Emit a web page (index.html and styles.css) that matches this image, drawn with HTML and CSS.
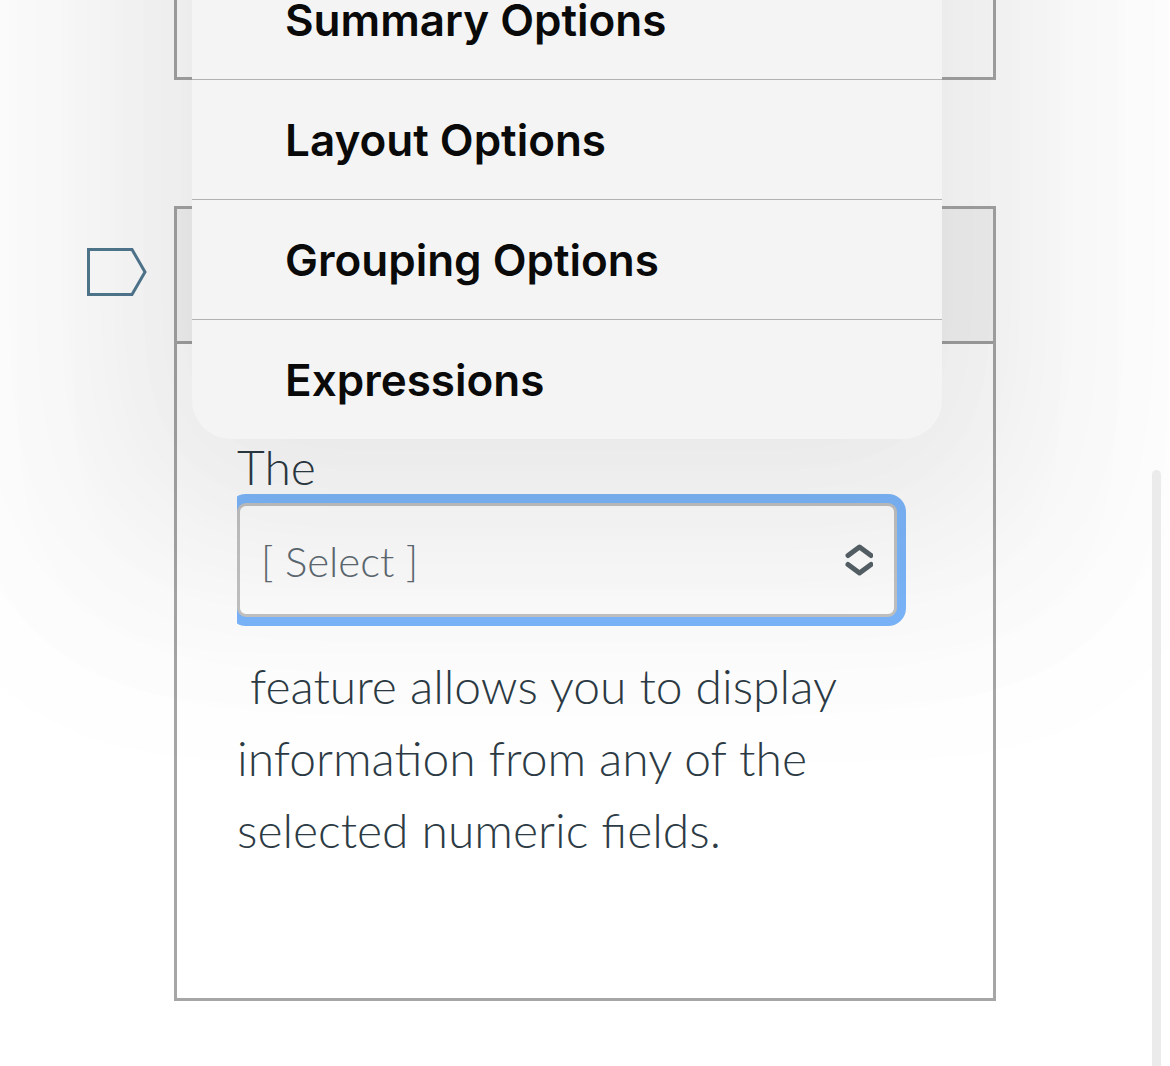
FILE: index.html
```html
<!DOCTYPE html>
<html lang="en">
<head>
    <meta charset="UTF-8">
    <meta name="viewport" content="width=device-width, initial-scale=1.0">
    <title>Quiz</title>
    <link rel="stylesheet" href="styles.css">
</head>
<body>
    <main class="page">
        <section class="card card-previous"></section>

        <button class="flag" type="button" aria-label="Flag question">
            <svg width="60" height="48" viewBox="0 0 60 48" fill="none" stroke="#527991" stroke-width="3">
                <path d="M1.5 1.5H45L58 24L45 46.5H1.5Z"/>
            </svg>
        </button>
        <section class="card">
            <div class="card-header"></div>
            <div class="card-body">
                <label for="answer">The</label>
                <div class="field">
                    <div class="select-clip">
                        <select id="answer" class="select">
                            <option>[ Select ]</option>
                            <option>Summary Options</option>
                            <option>Layout Options</option>
                            <option>Grouping Options</option>
                            <option>Expressions</option>
                        </select>
                        <svg class="arrows" width="28" height="32" viewBox="0 0 28 32" fill="none" stroke="#566269" stroke-width="5" stroke-linecap="round" stroke-linejoin="round">
                            <path d="M3 11.5L14.5 3L26 11.5M3 20.5L14.5 29L26 20.5"/>
                        </svg>
                    </div>
                    <div class="menu">
                        <button class="menu-item" type="button">Summary Options</button>
                        <button class="menu-item" type="button">Layout Options</button>
                        <button class="menu-item" type="button">Grouping Options</button>
                        <button class="menu-item" type="button">Expressions</button>
                    </div>
                </div>
                <p class="text">&nbsp;feature allows you to display information from any of the selected numeric fields.</p>
            </div>
        </section>
    </main>
    <div class="scrollbar"></div>
</body>
</html>
```

FILE: styles.css
```css
* {
    box-sizing: border-box;
}
body {
    margin: 0;
    background: #fff;
    color: #2d3b45;
    font-family: Lato, sans-serif;
    font-size: 48px;
    font-weight: 300;
    line-height: 72px;
}
.page {
    display: grid;
    grid-template-columns: 60px 1fr;
    column-gap: 27px;
    padding: 0 174px 65px 87px;
}
.card {
    grid-column: 2;
    border: 3px solid #a6a6a6;
}
.card-previous {
    height: 80px;
    margin-bottom: 126px;
    border-top: 0;
}
.card-header {
    height: 135px;
    background: #f5f5f5;
    border-bottom: 3px solid #a0a0a0;
}
.card-body {
    padding: 87px 60px 132px;
}
.card-body label {
    display: block;
}
.flag {
    align-self: start;
    width: 60px;
    height: 48px;
    margin-top: 42px;
    padding: 0;
    border: 0;
    background: none;
}
.flag svg {
    display: block;
}
.field {
    position: relative;
    margin: 0 36px 33px 0;
}
/* the focus ring is cut off on the left side */
.select-clip {
    clip-path: inset(-9px -9px -9px 0);
}
.select {
    display: block;
    width: 100%;
    height: 114px;
    padding: 2px 72px 0 21px;
    border: 3px solid #c4c4c4;
    border-radius: 9px;
    outline: 0;
    box-shadow: 0 0 0 9px #7cb7fb;
    appearance: none;
    background: #fff;
    color: #5f6b73;
    font-family: inherit;
    font-size: 42px;
    font-weight: 300;
}
.arrows {
    position: absolute;
    right: 24px;
    top: 41px;
    pointer-events: none;
}
.menu {
    position: absolute;
    z-index: 10;
    left: -45px;
    right: -45px;
    bottom: calc(100% + 64px);
    padding-top: 480px;
    border-radius: 39px;
    background: #f4f4f4;
    box-shadow: 0 20px 150px 30px rgba(0, 0, 0, 0.04),
                0 20px 200px 130px rgba(0, 0, 0, 0.04),
                0 40px 200px 200px rgba(0, 0, 0, 0.02);
}
.menu-item {
    display: block;
    width: 100%;
    height: 120px;
    padding: 0 93px;
    border: 0;
    border-bottom: 1px solid #b2b2b2;
    background: none;
    color: #0a0a0a;
    font-family: Inter, sans-serif;
    font-size: 44px;
    font-weight: 600;
    text-align: left;
}
.menu-item:last-child {
    height: 119px;
    border-bottom: 0;
}
.text {
    margin: 0;
}
.scrollbar {
    position: fixed;
    z-index: 11;
    top: 470px;
    right: 9px;
    bottom: -9px;
    width: 9px;
    border-radius: 5px;
    background: #ebebeb;
}
```
